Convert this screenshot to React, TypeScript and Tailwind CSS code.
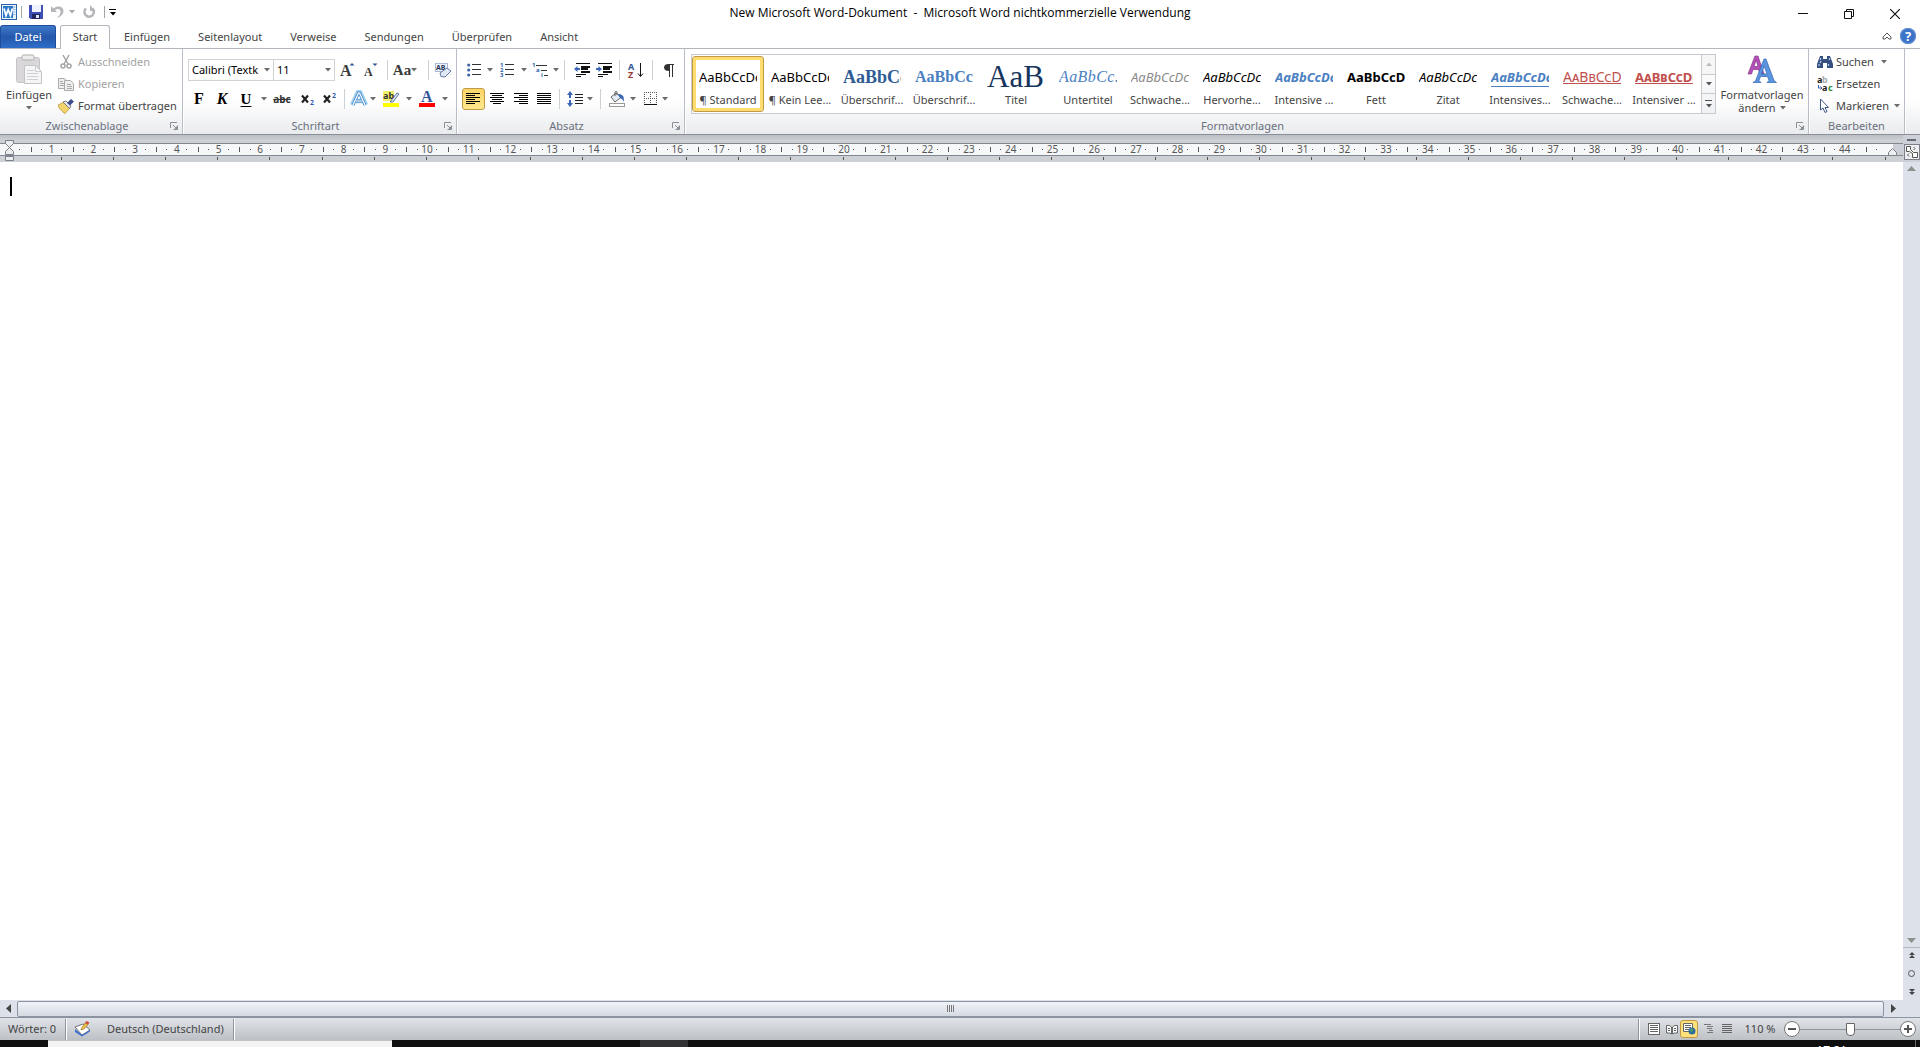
import type { ReactNode } from 'react';
import clsx from 'clsx';

const tabs = ['Einfügen', 'Seitenlayout', 'Verweise', 'Sendungen', 'Überprüfen', 'Ansicht'];

const sans = 'text-[13px] text-black';
const serif = "font-['Liberation_Serif',serif]";

const styles = [
  { label: '¶ Standard', preview: 'AaBbCcDc', look: sans },
  { label: '¶ Kein Lee...', preview: 'AaBbCcDc', look: sans },
  { label: 'Überschrif...', preview: 'AaBbCc', look: `${serif} text-[18px] font-bold text-[#2f5c94]` },
  { label: 'Überschrif...', preview: 'AaBbCc', look: `${serif} text-[16px] font-bold text-[#4a80c2]` },
  { label: 'Titel', preview: 'AaB', look: `${serif} text-[31px] text-[#17365d]` },
  { label: 'Untertitel', preview: 'AaBbCc.', look: `${serif} text-[16px] italic tracking-wide text-[#4a80c2]` },
  { label: 'Schwache...', preview: 'AaBbCcDc', look: 'text-[13px] italic text-[#8a8a8a]' },
  { label: 'Hervorhe...', preview: 'AaBbCcDc', look: 'text-[13px] italic text-black' },
  { label: 'Intensive ...', preview: 'AaBbCcDc', look: 'text-[13px] italic font-bold text-[#4a80c2]' },
  { label: 'Fett', preview: 'AaBbCcDc', look: 'text-[13px] font-bold text-black' },
  { label: 'Zitat', preview: 'AaBbCcDc', look: 'text-[13px] italic text-black' },
  { label: 'Intensives...', preview: 'AaBbCcDc', look: 'text-[13px] italic font-bold text-[#4a80c2] underline underline-offset-4' },
  { label: 'Schwache...', preview: 'AaBbCcDd', look: 'text-[14px] [font-variant:small-caps] text-[#c0504d] underline' },
  { label: 'Intensiver ...', preview: 'AaBbCcDd', look: 'text-[13px] [font-variant:small-caps] font-bold text-[#c0504d] underline' },
];

function Arrow({ className = 'text-[#6b6b6b]' }: { className?: string }) {
  return (
    <svg width="6" height="4" viewBox="0 0 6 4" className={clsx('shrink-0', className)} aria-hidden="true">
      <path d="M0 0h6L3 3.500z" fill="currentColor" />
    </svg>
  );
}

function Drop({ label }: { label: string }) {
  return (
    <button aria-label={label} className="flex h-[22px] w-2 shrink-0 items-center justify-center">
      <Arrow />
    </button>
  );
}

function Sep() {
  return <div className="h-5 w-px shrink-0 bg-[#cdd1d6]" />;
}

function Tool({ label, w, active, children }: { label: string; w: string; active?: boolean; children: ReactNode }) {
  return (
    <button
      aria-label={label}
      className={clsx(
        'flex h-[22px] shrink-0 items-center justify-center',
        w,
        active && 'rounded-[3px] border border-[#c29a45] bg-linear-to-b from-[#fbd568] to-[#fee88c]',
      )}
    >
      {children}
    </button>
  );
}

function Group({ title, w, launcher, children }: { title: string; w: string; launcher?: boolean; children: ReactNode }) {
  return (
    <section className={clsx('flex flex-col border-r border-[#b9bec6] shadow-[1px_0_0_#fff]', w)}>
      <div className="flex h-[68px]">{children}</div>
      <div className="flex h-[17px] items-center px-1">
        <span className="flex-1 text-center text-[#6a6f7d]">{title}</span>
        {launcher && (
          <button aria-label={`${title} Optionen`} className="shrink-0">
            <svg width="8" height="8" viewBox="0 0 8 8" fill="none" stroke="#8b9098">
              <path d="M.5 6V.5H7M3 3l3 3M7.500 3.500v4h-4" />
              <path d="M7 4v3.500H4z" fill="#8b9098" stroke="none" />
            </svg>
          </button>
        )}
      </div>
    </section>
  );
}

/* horizontal text lines used by the alignment and list icons */
function Lines({ rows, w = 15, color = '#000', step = 2 }: { rows: [number, number][]; w?: number; color?: string; step?: number }) {
  return (
    <svg width={w} height={rows.length * step} viewBox={`0 0 ${w} ${rows.length * step}`} shapeRendering="crispEdges">
      {rows.map(([x, len], i) => (
        <rect key={i} x={x} y={i * step} width={len} height="1" fill={color} />
      ))}
    </svg>
  );
}

function TitleBar() {
  return (
    <header className="grid h-6 grid-cols-[1fr_auto_1fr] items-center">
      <div className="flex items-center">
        <svg width="18" height="18" viewBox="0 0 18 18" className="ml-px">
          <rect x=".5" y="1.500" width="15" height="15" fill="#e9f2fb" stroke="#2a62b0" />
          <rect x="2" y="3" width="10" height="12" fill="#2c78c8" />
          <path d="M12 4h2.500M12 6.500h2.500M12 9h2.500M12 11.500h2.500" stroke="#8db4e0" />
          <path d="M3 5.500l2 7 2.200-6 2.200 6 2-7" fill="none" stroke="#fff" strokeWidth="1.800" />
        </svg>
        <div className="ml-0.5 h-3 w-px bg-[#a5a5a5]" />
        <button aria-label="Speichern" className="ml-[7px]">
          <svg width="14" height="14" viewBox="0 0 14 14">
            <path d="M0 0h14v14H1.500L0 12.500z" fill="#3d4fb4" />
            <rect x="3" y="0" width="9" height="7" fill="#eef2fc" />
            <rect x="3" y="9" width="8" height="5" fill="#20275f" />
            <rect x="7" y="10" width="3" height="3" fill="#dfe5f7" />
          </svg>
        </button>
        <button aria-label="Rückgängig" className="ml-2">
          <svg width="14" height="14" viewBox="0 0 14 14">
            <path d="M0 1v6h6L4 5c3-2 6-1 5.500 2.500C9.300 9.500 8 11 6 13c4-1.500 6.500-4 6.500-7C12.500 1.500 7 0 2.500 3.500z" fill="#b4b6ba" />
          </svg>
        </button>
        <button aria-label="Rückgängig Liste" className="ml-1"><Arrow className="text-[#a9a9a9]" /></button>
        <button aria-label="Wiederholen" className="ml-2">
          <svg width="13" height="14" viewBox="0 0 13 14" fill="none" stroke="#b4b6ba" strokeWidth="2.500">
            <path d="M3 3.500a4.700 4.700 0 1 0 6.500.2" />
            <path d="M7 0v6h5.500z" fill="#b4b6ba" stroke="none" />
          </svg>
        </button>
        <div className="ml-2 h-3 w-px bg-[#a5a5a5]" />
        <button aria-label="Symbolleiste anpassen" className="ml-1 flex flex-col items-center gap-0.5">
          <span className="h-px w-[7px] bg-black" />
          <Arrow className="text-black" />
        </button>
      </div>
      <h1 className="pt-0.5 font-['Open_Sans',sans-serif] text-[12px] whitespace-pre text-black">New Microsoft Word-Dokument  -  Microsoft Word nichtkommerzielle Verwendung</h1>
      <div className="flex items-end justify-end gap-9 pt-1 pr-5">
        <button aria-label="Minimieren" className="pb-[5px]">
          <svg width="10" height="1"><rect width="10" height="1" fill="#111" /></svg>
        </button>
        <button aria-label="Wiederherstellen">
          <svg width="10" height="10" viewBox="0 0 10 10" fill="none" stroke="#111">
            <path d="M.5 2.500h7v7h-7zM2.500 2.500v-2h7v7h-2" />
          </svg>
        </button>
        <button aria-label="Schließen">
          <svg width="10" height="10" viewBox="0 0 10 10" stroke="#111" strokeWidth="1.200"><path d="M0 0l10 10M10 0L0 10" /></svg>
        </button>
      </div>
    </header>
  );
}

function TabRow() {
  return (
    <nav className="flex h-[25px] items-end border-b border-[#b3b6bd]">
      <button className="h-[23px] w-14 rounded-t-[3px] border border-b-0 border-[#1d4f9c] bg-linear-to-b from-[#3f78ca] via-[#2458ab] to-[#2f6dc9] text-white">
        Datei
      </button>
      <button className="-mb-px ml-1 h-6 w-[50px] rounded-t-[3px] border border-b-0 border-[#b3b6bd] bg-white pb-0.5 text-[#444]">Start</button>
      {tabs.map((tab) => (
        <button key={tab} className="h-[23px] px-[14px] text-[#444]">{tab}</button>
      ))}
      <div className="ml-auto flex items-center gap-2 pr-1 pb-1">
        <button aria-label="Menüband minimieren">
          <svg width="10" height="8" viewBox="0 0 10 8" fill="none" stroke="#555"><path d="M1 5l4-4 4 4v2H7L5 5 3 7H1z" /></svg>
        </button>
        <button aria-label="Hilfe" className="flex size-4 items-center justify-center rounded-full bg-[#3b73c9] text-[13px] leading-4 font-bold text-white ring-1 ring-[#6b93cf] ring-inset">?</button>
      </div>
    </nav>
  );
}

function Clipboard() {
  const row = 'flex h-[22px] items-center gap-[3px] whitespace-nowrap';
  return (
    <Group title="Zwischenablage" w="w-[183px] shrink-0" launcher>
      <button className="flex w-[58px] shrink-0 flex-col items-center pt-[5px] text-[#444]">
        <svg width="28" height="31" viewBox="0 0 28 31">
          <rect x="1.500" y="3.500" width="23" height="25" rx="2" fill="#d9d7d9" stroke="#c6c4c6" />
          <rect x="7" y="1" width="12" height="5" rx="1.500" fill="#ececec" stroke="#b0aeb0" />
          <path d="M9.500 11.500h11l6 6v12h-17z" fill="#f6f6f7" stroke="#c3c2c8" />
          <path d="M20.500 11.500v6h6M12 16.500h7M12 19.500h11M12 22.500h11M12 25.500h11" fill="none" stroke="#cfced4" />
        </svg>
        <span className="mt-0.5 leading-4">Einfügen</span>
        <span className="mt-[3px]"><Arrow /></span>
      </button>
      <div className="flex flex-col pt-[2px]">
        <button className={clsx(row, 'text-[#a3a3a3]')}>
          <svg width="17" height="16" viewBox="0 0 17 16" fill="none" stroke="#a5a5a5" strokeWidth="1.500">
            <path d="M5 1l5 9M11 1l-5 9" />
            <circle cx="5" cy="12" r="2" />
            <circle cx="11" cy="12" r="2" />
          </svg>
          Ausschneiden
        </button>
        <button className={clsx(row, 'text-[#a3a3a3]')}>
          <svg width="17" height="14" viewBox="0 0 17 14" fill="#efefef" stroke="#aaa">
            <path d="M.5 1.500h6l3 3v7h-9z" />
            <path d="M6.500 3.500h6l3 3v7h-9zM9 7.500h4M9 9.500h5M9 11.500h5M2 4.500h3M2 6.500h4M2 8.500h4" />
          </svg>
          Kopieren
        </button>
        <button className={clsx(row, 'text-[#444]')}>
          <svg width="17" height="15" viewBox="0 0 17 15">
            <path d="M0 6l6-3 6 6-5 5.500c-2-.5-2-2-3.500-3S1 9 0 6z" fill="#f3d36c" stroke="#b08d2e" strokeWidth=".7" />
            <path d="M5 3l3-1 5 5-1.500 2.500z" fill="#e4e6ec" stroke="#555" strokeWidth=".7" />
            <path d="M9 4l4-4 3 2.500-4 4z" fill="#3f4c8c" />
          </svg>
          Format übertragen
        </button>
      </div>
    </Group>
  );
}

function FontGroup() {
  const combo = 'h-[22px] w-full appearance-none border border-[#d0d2d6] bg-white pl-[3px] text-black outline-none';
  return (
    <Group title="Schriftart" w="w-[274px] shrink-0" launcher>
      <div className="flex flex-col gap-[7px] pt-[10px] pl-[5px]">
        <div className="flex items-center">
          <label className="relative w-[86px]">
            <select aria-label="Schriftart" className={combo}><option>Calibri (Textk</option></select>
            <span className="pointer-events-none absolute top-[9px] right-1"><Arrow /></span>
          </label>
          <label className="relative -ml-px w-[62px]">
            <select aria-label="Schriftgrad" className={combo}><option>11</option></select>
            <span className="pointer-events-none absolute top-[9px] right-1"><Arrow /></span>
          </label>
          <Tool label="Schrift vergrößern" w="w-6">
            <svg width="15" height="16" viewBox="0 0 15 16" className="overflow-visible">
              <text x="0" y="14" fontSize="16" fontWeight="bold" fill="#3a3a3a" className={serif}>A</text>
              <path d="M9.500 3.500h5L12 1z" fill="#2f5597" />
            </svg>
          </Tool>
          <Tool label="Schrift verkleinern" w="w-6">
            <svg width="14" height="16" viewBox="0 0 14 16" className="overflow-visible">
              <text x="0" y="14" fontSize="12" fontWeight="bold" fill="#3a3a3a" className={serif}>A</text>
              <path d="M8.500 1.500h5L11 4z" fill="#2f5597" />
            </svg>
          </Tool>
          <div className="ml-1"><Sep /></div>
          <Tool label="Groß-/Kleinschreibung" w="w-[34px]">
            <span className={clsx(serif, 'text-[15px] font-bold text-[#3a3a3a]')}>Aa</span>
            <Arrow />
          </Tool>
          <div className="ml-[6px]"><Sep /></div>
          <Tool label="Formatierung löschen" w="w-7">
            <svg width="17" height="16" viewBox="0 0 17 16" className="overflow-visible">
              <rect x=".5" y="1.500" width="12" height="8" fill="#eef3fb" stroke="#a9b9d6" />
              <text x="1" y="8" fontSize="7" fontWeight="bold" fill="#27365a">AB</text>
              <path d="M5 11l7-5 4 3-6 6-4-.5z" fill="#dfe9f7" stroke="#64779f" />
            </svg>
          </Tool>
        </div>
        <div className="flex items-center">
          <Tool label="Fett" w="w-[22px]"><span className={clsx(serif, 'text-[16px] font-bold text-black')}>F</span></Tool>
          <Tool label="Kursiv" w="w-6"><span className={clsx(serif, 'text-[16px] font-bold text-black italic')}>K</span></Tool>
          <Tool label="Unterstrichen" w="w-6"><span className={clsx(serif, 'text-[15px] font-bold text-black underline underline-offset-2')}>U</span></Tool>
          <div className="ml-0.5"><Drop label="Unterstreichung" /></div>
          <Tool label="Durchgestrichen" w="w-7"><span className="text-[10px] font-bold text-[#333] line-through">abc</span></Tool>
          <Tool label="Tiefgestellt" w="w-[22px]">
            <svg width="13" height="14" viewBox="0 0 13 14" className="overflow-visible"><path d="M1 3.500l6 7M7 3.500l-6 7" stroke="#222" strokeWidth="2.200" /><text x="9" y="13" fontSize="7" fontWeight="bold" fill="#2f5fb0">2</text></svg>
          </Tool>
          <Tool label="Hochgestellt" w="w-[22px]">
            <svg width="13" height="14" viewBox="0 0 13 14" className="overflow-visible"><path d="M1 3.500l6 7M7 3.500l-6 7" stroke="#222" strokeWidth="2.200" /><text x="9" y="6" fontSize="7" fontWeight="bold" fill="#2f5fb0">2</text></svg>
          </Tool>
          <div className="ml-1"><Sep /></div>
          <Tool label="Texteffekte" w="w-7">
            <svg width="18" height="18" viewBox="0 0 18 18">
              <path d="M2 15L8 2h2l6 13M5 11h8" fill="none" stroke="#a5d0ee" strokeWidth="4.500" strokeLinejoin="round" />
              <path d="M3 15L8.500 3h1L15 15M6 11h6" fill="none" stroke="#4a8fd0" strokeWidth="3" />
              <path d="M3 15L8.500 3h1L15 15M6 11h6" fill="none" stroke="#fff" strokeWidth="1.200" />
            </svg>
          </Tool>
          <div className="-ml-1"><Drop label="Texteffekte Auswahl" /></div>
          <Tool label="Texthervorhebung" w="w-7">
            <svg width="16" height="18" viewBox="0 0 16 18" className="overflow-visible">
              <rect x="0" y="1" width="11" height="10" fill="#f3f06a" />
              <text x="0" y="9" fontSize="9" fontWeight="bold" fill="#333">ab</text>
              <path d="M7 12l7-9 2 1-6 8z" fill="#d8e4f4" stroke="#3e5686" strokeWidth=".8" />
              <rect x="0" y="13" width="16" height="4" fill="#ff0" />
            </svg>
          </Tool>
          <Drop label="Hervorhebungsfarbe" />
          <Tool label="Schriftfarbe" w="w-7">
            <svg width="16" height="18" viewBox="0 0 16 18" className="overflow-visible">
              <text x="2" y="12" fontSize="16" fontWeight="bold" fill="#34569b" className={serif}>A</text>
              <rect x="0" y="13" width="16" height="4" fill="#f00" />
            </svg>
          </Tool>
          <Drop label="Schriftfarbe Auswahl" />
        </div>
      </div>
    </Group>
  );
}

function ListIcon({ marks }: { marks: 'dots' | 'numbers' }) {
  return (
    <svg width="14" height="14" viewBox="0 0 14 14" className="overflow-visible">
      {[2, 7, 12].map((y, i) => (
        <g key={y}>
          {marks === 'dots' ? (
            <circle cx="1.700" cy={y} r="1.600" fill="#3d62a8" />
          ) : (
            <text x="0" y={y + 2} fontSize="6" fontWeight="bold" fill="#2f5fb0">{i + 1}</text>
          )}
          <rect x="5" y={y - 1} width="9" height="1" fill="#333" />
        </g>
      ))}
    </svg>
  );
}

function IndentIcon({ right }: { right?: boolean }) {
  return (
    <svg width="16" height="14" viewBox="0 0 16 14" shapeRendering="crispEdges">
      <path d="M2 .5h14M2 11.500h10M2 13.500h5" stroke="#111" />
      <path d="M7 3.500h9M7 6h7M7 8.500h9" stroke="#111" strokeWidth="2" />
      <path d={right ? 'M6 6L2.500 3v2H0v2h2.500v2z' : 'M0 6l3.500-3v2H6v2H3.500v2z'} fill="#3a66b5" shapeRendering="auto" />
    </svg>
  );
}

function ParagraphGroup() {
  return (
    <Group title="Absatz" w="w-[228px] shrink-0" launcher>
      <div className="flex flex-col gap-[7px] pt-[10px] pl-[5px]">
        <div className="flex items-center">
          <Tool label="Aufzählungszeichen" w="w-6"><ListIcon marks="dots" /></Tool>
          <Drop label="Aufzählungszeichen Auswahl" />
          <Tool label="Nummerierung" w="w-[26px]"><ListIcon marks="numbers" /></Tool>
          <Drop label="Nummerierung Auswahl" />
          <Tool label="Liste mit mehreren Ebenen" w="w-6">
            <svg width="17" height="16" viewBox="0 0 17 16" fontSize="6" fontWeight="bold" fill="#2f5fb0" className="overflow-visible">
              <text x="0" y="5">1</text><text x="4" y="10">a</text><text x="9" y="15">i</text>
              <path d="M4 3.500h11M9 8.500h6M12 13.500h4" stroke="#333" />
            </svg>
          </Tool>
          <Drop label="Listenebene" />
          <div className="ml-1"><Sep /></div>
          <div className="ml-[6px] flex">
            <Tool label="Einzug verkleinern" w="w-[22px]"><IndentIcon /></Tool>
            <Tool label="Einzug vergrößern" w="w-[22px]"><IndentIcon right /></Tool>
          </div>
          <div className="ml-1"><Sep /></div>
          <Tool label="Sortieren" w="w-8">
            <svg width="16" height="16" viewBox="0 0 16 16" fontSize="9" fontWeight="bold" className="overflow-visible">
              <text x="0" y="8" fill="#2f5597">A</text>
              <text x="0" y="16" fill="#953735">Z</text>
              <path d="M12.500 1v13M10 11.500l2.500 3 2.500-3" stroke="#111" fill="none" />
            </svg>
          </Tool>
          <Sep />
          <Tool label="Absatzmarken" w="w-8">
            <svg width="10" height="13" viewBox="0 0 10 13"><path d="M10 0v1H9v12H8V1H6v12H5V7C2 7 0 6 0 3.500S2 0 4.500 0z" fill="#333" /></svg>
          </Tool>
        </div>
        <div className="flex items-center">
          <Tool label="Linksbündig" w="w-[23px]" active><Lines rows={[[0, 14], [0, 9], [0, 14], [0, 9], [0, 14], [0, 9]]} /></Tool>
          <Tool label="Zentriert" w="w-6"><Lines rows={[[0, 14], [2, 10], [0, 14], [2, 10], [0, 14], [3, 8]]} /></Tool>
          <Tool label="Rechtsbündig" w="w-6"><Lines rows={[[0, 14], [5, 9], [0, 14], [5, 9], [0, 14], [5, 9]]} /></Tool>
          <Tool label="Blocksatz" w="w-[22px]"><Lines rows={[[0, 14], [0, 14], [0, 14], [0, 14], [0, 14], [0, 14]]} /></Tool>
          <div className="ml-1"><Sep /></div>
          <Tool label="Zeilenabstand" w="w-[30px]">
            <svg width="16" height="16" viewBox="0 0 16 16">
              <path d="M3 0l3 4H4v3H2V4H0zM3 16l3-4H4V9H2v3H0z" fill="#3a66b5" />
              <path d="M8 3.500h8M8 6.500h8M8 9.500h8M8 12.500h8" stroke="#222" />
            </svg>
          </Tool>
          <div className="-ml-1"><Drop label="Abstand Auswahl" /></div>
          <div className="ml-1.5"><Sep /></div>
          <Tool label="Schattierung" w="w-8">
            <svg width="18" height="16" viewBox="0 0 18 16">
              <path d="M3 6l5-4 5 4.500-6 4.500z" fill="#e6ecf6" stroke="#444" strokeWidth=".8" />
              <path d="M7 5V1.500C7 0 9 0 9 1.500V4" fill="none" stroke="#555" />
              <path d="M10 3c4 0 7 2 5.500 8C14.500 8 13 7 12 7z" fill="#3a66b5" />
              <rect x="1.500" y="12.500" width="15" height="3" fill="#fff" stroke="#999" />
            </svg>
          </Tool>
          <div className="-ml-1"><Drop label="Schattierung Auswahl" /></div>
          <Tool label="Rahmen" w="w-7">
            <svg width="14" height="14" viewBox="0 0 14 14" fill="none" stroke="#555" strokeDasharray="1 1">
              <path d="M0 .5h13M.5 0v13M12.500 0v13M6.500 0v13M0 6.500h13" />
              <path d="M0 12.500h13" stroke="#111" strokeDasharray="none" />
            </svg>
          </Tool>
          <div className="-ml-1"><Drop label="Rahmen Auswahl" /></div>
        </div>
      </div>
    </Group>
  );
}

function StylesGroup() {
  return (
    <Group title="Formatvorlagen" w="min-w-0 flex-1" launcher>
      <div className="mt-[5px] ml-[6px] flex h-[60px] min-w-0 flex-1 border border-[#c8cace] bg-white">
        <div className="flex min-w-0 flex-1 overflow-hidden pt-px">
          {styles.map((s, i) => (
            <button
              key={i}
              className={clsx(
                'flex h-14 w-[72px] shrink-0 flex-col items-center border',
                i === 0 ? 'rounded-[3px] border-[#c29a45] shadow-[inset_0_0_0_3px_#ffdc6e]' : 'border-transparent',
              )}
            >
              <span className="mt-[5px] flex h-[30px] w-[58px] items-baseline overflow-hidden whitespace-nowrap">
                <span className={clsx('leading-[30px]', s.look)}>{s.preview}</span>
              </span>
              <span className="leading-4 whitespace-nowrap text-[#444]">{s.label}</span>
            </button>
          ))}
        </div>
        <div className="flex w-[14px] shrink-0 flex-col divide-y divide-[#c8cace] border-l border-[#c8cace] bg-linear-to-b from-white to-[#f0f1f4]">
          <button aria-label="Zeile nach oben" className="flex flex-1 items-center justify-center bg-[#f6f6f7]"><span className="rotate-180"><Arrow className="text-[#bbb]" /></span></button>
          <button aria-label="Zeile nach unten" className="flex flex-1 items-center justify-center"><Arrow className="text-[#555]" /></button>
          <button aria-label="Weitere" className="flex flex-1 flex-col items-center justify-center gap-[3px]"><span className="h-px w-[7px] bg-[#555]" /><Arrow className="text-[#555]" /></button>
        </div>
      </div>
      <button className="flex w-[92px] shrink-0 flex-col items-center pt-[6px] leading-[13px] text-[#444]">
        <svg width="30" height="29" viewBox="0 0 30 29">
          <path d="M1 19L8 1h3l6 18h-4l-1.500-4.500H6L4.500 19zm6-7.500h4L9.200 5z" fill="#b44fb8" stroke="#843a8c" strokeWidth=".7" />
          <path d="M6 27.500l2.500-1.500L17 4h2l8 21.500 2.500 2H20l2-2-1.500-4h-7L12 25.500l2 2zM14.500 19H20l-2.800-8z" fill="#5b95e0" stroke="#2f62b0" strokeWidth=".7" />
        </svg>
        <span className="mt-1">Formatvorlagen</span>
        <span className="flex items-center gap-1">ändern <Arrow /></span>
      </button>
    </Group>
  );
}

function EditGroup() {
  const row = 'flex h-[22px] items-center gap-[3px] text-[#444] whitespace-nowrap';
  return (
    <Group title="Bearbeiten" w="w-24 shrink-0">
      <div className="flex flex-col pt-[2px] pl-2">
        <button className={row}>
          <svg width="16" height="14" viewBox="0 0 16 14">
            <path d="M3 1h3v3h4V1h3l3 8v4h-6V8H6v5H0V9z" fill="#35507f" />
            <path d="M3.500 3v2M12.500 3v2M2 9v2M11.500 9v2M4 6l-1 2" stroke="#b9cdf0" strokeWidth="1.200" />
          </svg>
          Suchen <span className="pl-1"><Arrow /></span>
        </button>
        <button className={row}>
          <svg width="16" height="16" viewBox="0 0 16 16" fontSize="9" fontWeight="bold" className="overflow-visible">
            <text x="0" y="7" fill="#222">a</text><text x="5" y="7" fill="#aaa">b</text>
            <text x="5" y="15" fill="#222">a</text><text x="11" y="15" fill="#1e8a2f">c</text>
            <path d="M1.500 9v3H5M3.500 10.500L5 12l-1.500 1.500" fill="none" stroke="#3a66b5" />
          </svg>
          Ersetzen
        </button>
        <button className={row}>
          <svg width="16" height="16" viewBox="0 0 16 16">
            <path d="M3.500 1v11l2.500-2 2 4.500 2-1L8 9.500h3.500z" fill="#fff" stroke="#3f5b86" />
          </svg>
          Markieren <span className="pl-0.5"><Arrow /></span>
        </button>
      </div>
    </Group>
  );
}

const CM = 41.7;

function Ruler() {
  const cms = Array.from({ length: 45 }, (_, i) => i);
  return (
    <div className="min-w-0 flex-1 overflow-hidden">
      <svg width="100%" height="26" className="block">
        <rect x="0" y="7" width="100%" height="13" fill="#818892" />
        <rect x="0" y="8" width="1893" height="11" fill="#f6f7f9" />
        <rect x="1893" y="8" width="100%" height="11" fill="#cbcfd5" />
        {cms.map((n) => {
          const x = 10 + n * CM;
          return (
            <g key={n} fill="#555">
              {n > 0 && <text x={x} y="17" fontSize="10" textAnchor="middle">{n}</text>}
              <rect x={Math.round(x + CM / 4 - 1)} y="13" width="1" height="1" />
              <rect x={Math.round(x + CM / 2)} y="11" width="1" height="5" />
              <rect x={Math.round(x + (CM * 3) / 4)} y="13" width="1" height="1" />
            </g>
          );
        })}
        {Array.from({ length: 36 }, (_, i) => (
          <rect key={i} x={Math.round(61 + i * 52.1)} y="21" width="1" height="3" fill="#555" />
        ))}
        <g fill="#eceef0" stroke="#7b8088">
          <path d="M5.500 4.500h8v3l-4 4-4-4zM9.500 11.500l4 4v3h-8v-3z" />
          <path d="M5.500 20.500h8v4h-8z" />
          <path d="M1892.500 12.500l4 4v3h-8v-3z" />
        </g>
      </svg>
    </div>
  );
}

function StatusBar() {
  const divider = <div className="h-[21px] w-0.5 border-r border-white bg-[#90959d]" />;
  return (
    <footer className="flex h-[23px] items-center border-t border-[#8b93a0] bg-linear-to-b from-[#e0e3e8] to-[#bdc1c6] text-[#444]">
      <button className="w-[65px] pl-2 text-left whitespace-nowrap">Wörter: 0</button>
      {divider}
      <button aria-label="Rechtschreibprüfung" className="ml-[7px]">
        <svg width="17" height="16" viewBox="0 0 17 16">
          <path d="M1 6l8-3 7 6-8 5z" fill="#fff" stroke="#555" strokeWidth=".8" />
          <path d="M1 8v3l7 4.500 8-5V9l-8 5z" fill="#3d6fd1" />
          <path d="M7 8l4-6 3 1.500L10 8l-3 1z" fill="#f0c14b" stroke="#8a6a20" strokeWidth=".6" />
          <path d="M11 2l1.500-2 3 1.500-1.500 2z" fill="#d14b3b" />
        </svg>
      </button>
      <button className="ml-[16px] pr-[9px] whitespace-nowrap">Deutsch (Deutschland)</button>
      {divider}
      <div className="ml-auto flex items-center">
        {divider}
        <button aria-label="Seitenlayout" className="ml-1 flex w-5 justify-center">
          <span className="flex border border-[#666] bg-white p-px"><Lines w={8} rows={[[0, 8], [0, 8], [0, 8], [0, 8]]} color="#666" /></span>
        </button>
        <button aria-label="Vollbild-Lesemodus" className="flex w-4 justify-center">
          <svg width="12" height="11" viewBox="0 0 12 11" fill="#f5f5f5" stroke="#666"><path d="M.5 1.500h3l2 1.500v7l-2-1h-3zM11.500 1.500h-3L6.500 3v7l2-1h3zM2 4.500h2M2 6.500h2M8 4.500h2M8 6.500h2" /></svg>
        </button>
        <button aria-label="Weblayout" className="flex h-[18px] w-[18px] items-center justify-center rounded-[3px] border border-[#c29a45] bg-[#ffe07a]">
          <svg width="13" height="12" viewBox="0 0 13 12">
            <path d="M.5.5h9v8h-9zM2 2.500h6M2 4.500h6M2 6.500h4" fill="#fff" stroke="#666" />
            <circle cx="9" cy="8" r="3.500" fill="#2f6f9f" />
            <path d="M7 7l2-1.500 1 1.500-1.500 2z" fill="#58ad57" />
          </svg>
        </button>
        <button aria-label="Gliederung" className="flex w-5 justify-center"><Lines w={9} rows={[[0, 7], [3, 6], [3, 5], [5, 4], [3, 6]]} color="#777" /></button>
        <button aria-label="Entwurf" className="flex w-[18px] justify-center"><Lines w={10} rows={[[0, 10], [0, 10], [0, 10], [0, 10], [0, 10]]} color="#666" /></button>
        <button className="w-12 text-center whitespace-nowrap">110 %</button>
        <button aria-label="Verkleinern" className="flex size-4 items-center justify-center rounded-full border border-[#777] bg-white">
          <span className="h-0.5 w-2 bg-[#555]" />
        </button>
        <input
          type="range"
          aria-label="Zoom"
          min="10"
          max="210"
          defaultValue="112"
          className="h-[14px] w-[100px] appearance-none bg-[linear-gradient(#8d95a3,#8d95a3)] bg-[length:100%_1px] bg-center bg-no-repeat [&::-webkit-slider-thumb]:h-[13px] [&::-webkit-slider-thumb]:w-[9px] [&::-webkit-slider-thumb]:appearance-none [&::-webkit-slider-thumb]:rounded-b-[4px] [&::-webkit-slider-thumb]:border [&::-webkit-slider-thumb]:border-[#666] [&::-webkit-slider-thumb]:bg-white"
        />
        <button aria-label="Vergrößern" className="mr-1 flex size-4 items-center justify-center rounded-full border border-[#777] bg-white">
          <svg width="8" height="8"><path d="M0 4h8M4 0v8" stroke="#555" strokeWidth="2" /></svg>
        </button>
      </div>
    </footer>
  );
}

function VerticalScroll() {
  return (
    <div className="flex w-[17px] shrink-0 flex-col items-center bg-[#dde1e9]">
      <div className="flex h-[27px] w-full flex-col items-center gap-[3px] bg-[#cdd1d7] pt-[4px]">
        <span className="h-0.5 w-[9px] bg-[#666c74]" />
        <button aria-label="Lineal" className="flex size-4 items-center justify-center border border-[#7b8088] bg-[#eceef0]">
          <svg width="12" height="12" viewBox="0 0 12 12" fill="#fff" stroke="#555"><path d="M.5.5h4v3l3 3h4v5h-5v-4l-3-2h-3zM7.500 1l1.500 1.500L7.500 4M3 7.500L1.500 9 3 10.500" /></svg>
        </button>
      </div>
      <button aria-label="Nach oben" className="pt-1"><svg width="9" height="5"><path d="M0 5h9L4.500 0z" fill="#87938f" /></svg></button>
      <div className="flex-1" />
      <button aria-label="Nach unten"><svg width="9" height="5"><path d="M0 0h9L4.500 5z" fill="#87938f" /></svg></button>
      <div className="mt-1 flex h-[70px] w-full flex-col items-center gap-3 border-t border-[#b4b9c2] pt-1">
        <button aria-label="Vorherige Seite"><svg width="6" height="6"><path d="M0 3h6L3 0zM0 6h6L3 3z" fill="#444" /></svg></button>
        <button aria-label="Browseobjekt auswählen" className="size-[7px] rounded-full border border-[#555]" />
        <button aria-label="Nächste Seite"><svg width="6" height="6"><path d="M0 0h6L3 3zM0 3h6L3 6z" fill="#444" /></svg></button>
      </div>
    </div>
  );
}

export default function App() {
  return (
    <div className="flex h-screen flex-col overflow-hidden bg-white font-['Noto_Sans',sans-serif] text-[11px] leading-4">
      <TitleBar />
      <TabRow />
      <div className="flex h-[86px] border-b border-[#8b9098] bg-linear-to-b from-white from-60% to-[#e9ebee]">
        <Clipboard />
        <FontGroup />
        <ParagraphGroup />
        <StylesGroup />
        <EditGroup />
        <div className="w-[15px] shrink-0" />
      </div>
      <div className="flex min-h-0 flex-1">
        <main className="flex min-w-0 flex-1 flex-col">
          <div className="flex h-[27px] items-end bg-linear-to-b from-[#babfc5] to-[#cdd1d5] to-20%">
            <Ruler />
          </div>
          <div className="relative flex flex-1">
            <textarea aria-label="Dokument" className="flex-1 resize-none bg-white p-[10px] outline-none" />
            <div className="absolute top-[15px] left-[10px] h-[19px] w-0.5 bg-black" />
          </div>
          <div className="flex h-[17px] items-center bg-[#dde1e9]">
            <button aria-label="Nach links" className="flex w-[17px] justify-center"><svg width="5" height="9"><path d="M5 0v9L0 4.500z" fill="#444" /></svg></button>
            <div className="flex h-4 flex-1 items-center justify-center gap-px rounded-[2px] border border-[#8b93a0] bg-linear-to-b from-[#f0f3f8] to-[#d5dae2]">
              {[0, 1, 2, 3].map((i) => (
                <span key={i} className="h-[7px] w-px bg-[#777]" />
              ))}
            </div>
            <button aria-label="Nach rechts" className="flex w-[19px] justify-center"><svg width="5" height="9"><path d="M0 0v9l5-4.500z" fill="#444" /></svg></button>
          </div>
        </main>
        <VerticalScroll />
      </div>
      <StatusBar />
      <div className="flex h-[7px] shrink-0 overflow-hidden bg-[#0f0f10] pl-12 text-white">
        <div className="w-[344px] border-t border-[#c5c5c5] bg-[#f3f3f3]" />
        <div className="ml-[248px] w-12 bg-[#323234]" />
        <span className="mt-[3px] mr-[68px] ml-auto text-[12px]">17:21</span>
        <div className="mr-1 w-px bg-[#666]" />
      </div>
    </div>
  );
}
